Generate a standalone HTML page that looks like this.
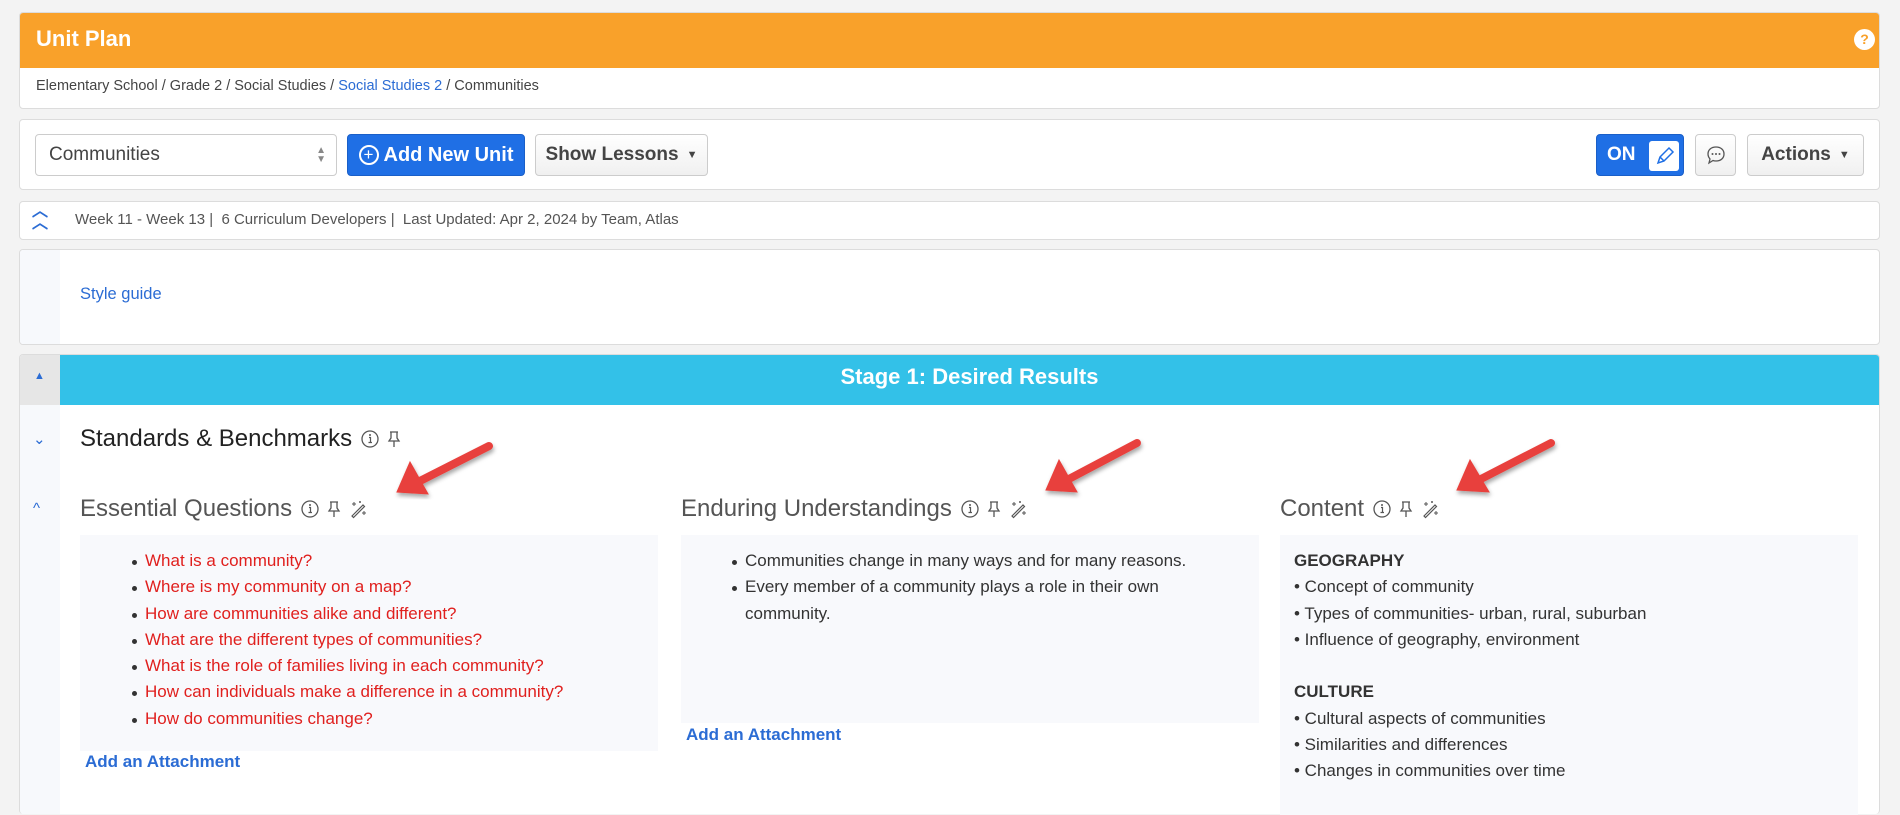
<!DOCTYPE html>
<html><head><meta charset="utf-8"><style>
*{box-sizing:border-box;margin:0;padding:0}
body{width:1900px;height:802px;overflow:hidden;background:#f3f3f3;font-family:"Liberation Sans",sans-serif;position:relative;color:#333}
.a{position:absolute}
.card{position:absolute;background:#fff;border:1px solid #dcdcdc;border-radius:4px}
.btn{position:absolute;border:1px solid #ccc;border-radius:4px;background:linear-gradient(#fff,#f0f0f0);font-size:19px;color:#444;display:flex;align-items:center;justify-content:center}
.h{position:absolute;font-size:24px;color:#555;white-space:nowrap;display:flex;align-items:center}
.h svg{margin-left:8px}
.box{position:absolute;background:#f8f9fc}
ul{list-style:none}
li{position:relative;font-size:17px;line-height:26.3px;white-space:nowrap}
li:before{content:"";position:absolute;left:-13px;top:12px;width:5px;height:5px;border-radius:50%;background:#333}
.red li{color:#e0201e}
.att{position:absolute;color:#2b6cd4;font-size:17px;font-weight:bold}
.c3 div{font-size:17px;line-height:26.3px;color:#333;white-space:nowrap}
</style></head><body>
<!-- header card -->
<div class="card" style="left:19px;top:12px;width:1861px;height:97px;overflow:hidden">
 <div class="a" style="left:0;top:0;width:100%;height:55px;background:#f9a12a"></div>
 <div class="a" style="left:16px;top:13px;font-size:22px;font-weight:bold;color:#fff">Unit Plan</div>
 <div class="a" style="left:1834px;top:16px;width:21px;height:21px;border-radius:50%;background:#fff;color:#f9a12a;font-size:14px;font-weight:bold;text-align:center;line-height:21px">?</div>
 <div class="a" style="left:16px;top:65px;font-size:14.5px;color:#444">Elementary School / Grade 2 / Social Studies / <span style="color:#2b6cd4">Social Studies 2</span> / Communities</div>
</div>
<!-- toolbar -->
<div class="card" style="left:19px;top:119px;width:1861px;height:71px"></div>
<div class="btn" style="left:35px;top:134px;width:302px;height:42px;justify-content:flex-start;padding-left:13px;background:#fff;color:#444">Communities<span class="a" style="right:10px;top:11px;font-size:10px;line-height:9px;color:#888">▲<br>▼</span></div>
<div class="btn" style="left:347px;top:134px;width:178px;height:42px;background:#1f6fe5;border-color:#1a5fc8;color:#fff;font-weight:bold;font-size:20px"><span style="display:inline-block;width:20px;height:20px;border:2px solid #fff;border-radius:50%;font-size:17px;line-height:15px;text-align:center;margin-right:5px;font-weight:normal">+</span>Add New Unit</div>
<div class="btn" style="left:535px;top:134px;width:173px;height:42px;font-weight:bold">Show Lessons <span style="font-size:11px;margin-left:8px">▼</span></div>
<div class="btn" style="left:1596px;top:134px;width:88px;height:42px;background:#1f6fe5;border-color:#1a5fc8;color:#fff;font-weight:bold;justify-content:flex-start;padding-left:10px">ON<span class="a" style="left:52px;top:6px;width:30px;height:30px;background:#fff;border-radius:3px"><svg width="30" height="30" viewBox="0 0 30 30"><path d="M9 22l2-6 9-9 4 4-9 9z M11 16l4 4" fill="none" stroke="#1f6fe5" stroke-width="1.5"/></svg></span></div>
<div class="btn" style="left:1695px;top:134px;width:41px;height:42px"><svg width="22" height="22" viewBox="0 0 22 22"><path d="M11 3c5 0 8 3 8 7s-3 7-8 7c-1 0-2 0-3-.5L4 19l1-4c-1-1.2-2-3-2-5 0-4 3-7 8-7z" fill="none" stroke="#555" stroke-width="1.3"/><circle cx="7.5" cy="10" r="1" fill="#555"/><circle cx="11" cy="10" r="1" fill="#555"/><circle cx="14.5" cy="10" r="1" fill="#555"/></svg></div>
<div class="btn" style="left:1747px;top:134px;width:117px;height:42px;font-weight:bold">Actions <span style="font-size:11px;margin-left:8px">▼</span></div>
<!-- meta -->
<div class="card" style="left:19px;top:201px;width:1861px;height:39px"></div>
<div class="a" style="left:32px;top:206px;font-size:16px;color:#2b6cd4;line-height:12px;font-weight:bold">︿<br>︿</div>
<div class="a" style="left:75px;top:211px;font-size:15px;color:#555">Week 11 - Week 13 |&nbsp; 6 Curriculum Developers |&nbsp; Last Updated: Apr 2, 2024 by Team, Atlas</div>
<!-- style guide -->
<div class="card" style="left:19px;top:249px;width:1861px;height:96px;overflow:hidden"><div class="a" style="left:0;top:0;width:40px;height:100%;background:#f7f9fc"></div></div>
<div class="a" style="left:80px;top:285px;font-size:16.5px;color:#2b6cd4">Style guide</div>
<!-- stage -->
<div class="card" style="left:19px;top:354px;width:1861px;height:460px;overflow:hidden;border-bottom:none">
 <div class="a" style="left:0;top:0;width:40px;height:100%;background:#f7f9fc"></div>
 <div class="a" style="left:0;top:0;width:40px;height:50px;background:#e6e6e6"></div>
 <div class="a" style="left:40px;top:0;right:0;height:50px;background:#33c1e8"></div>
</div>
<div class="a" style="left:34px;top:370px;font-size:11px;color:#2b6cd4">▲</div>
<div class="a" style="left:59px;top:364px;width:1821px;text-align:center;font-size:22px;font-weight:bold;color:#fff">Stage 1: Desired Results</div>
<div class="a" style="left:33px;top:430px;font-size:15px;color:#2b6cd4">⌄</div>
<div class="a" style="left:33px;top:500px;font-size:15px;color:#2b6cd4">^</div>

<svg width="0" height="0" style="position:absolute"><defs>
<symbol id="ic" viewBox="0 0 20 20"><circle cx="10" cy="10" r="8" fill="none" stroke="#555" stroke-width="1.3"/><path d="M9 8.5h1.5v5M8.5 13.5h3.5" fill="none" stroke="#555" stroke-width="1.2"/><circle cx="10" cy="6" r="1" fill="#555"/></symbol>
<symbol id="pin" viewBox="0 0 20 20"><path d="M6 3h8M7 3v6l-2 3h10l-2-3V3M10 12v6" fill="none" stroke="#555" stroke-width="1.3"/></symbol>
<symbol id="wand" viewBox="0 0 20 20"><path d="M4 17L15 6l1.5 1.5L5.5 18.5z" fill="none" stroke="#555" stroke-width="1.2"/><path d="M6 3v4M4 5h4M16 12v4M14 14h4M12 2v2M11 3h2" stroke="#555" stroke-width="1"/></symbol>
</defs></svg>

<div class="h" style="left:80px;top:425px;color:#222">Standards &amp; Benchmarks<svg width="20" height="20"><use href="#ic"/></svg><svg width="20" height="20" style="margin-left:4px"><use href="#pin"/></svg></div>
<div class="h" style="left:80px;top:495px">Essential Questions<svg width="20" height="20"><use href="#ic"/></svg><svg width="20" height="20" style="margin-left:4px"><use href="#pin"/></svg><svg width="20" height="20" style="margin-left:4px"><use href="#wand"/></svg></div>
<div class="h" style="left:681px;top:495px">Enduring Understandings<svg width="20" height="20"><use href="#ic"/></svg><svg width="20" height="20" style="margin-left:4px"><use href="#pin"/></svg><svg width="20" height="20" style="margin-left:4px"><use href="#wand"/></svg></div>
<div class="h" style="left:1280px;top:495px">Content<svg width="20" height="20"><use href="#ic"/></svg><svg width="20" height="20" style="margin-left:4px"><use href="#pin"/></svg><svg width="20" height="20" style="margin-left:4px"><use href="#wand"/></svg></div>

<div class="box" style="left:80px;top:535px;width:578px;height:216px"></div>
<ul class="red a" style="left:145px;top:548px">
<li>What is a community?</li><li>Where is my community on a map?</li><li>How are communities alike and different?</li><li>What are the different types of communities?</li><li>What is the role of families living in each community?</li><li>How can individuals make a difference in a community?</li><li>How do communities change?</li></ul>
<div class="att" style="left:85px;top:752px">Add an Attachment</div>

<div class="box" style="left:681px;top:535px;width:578px;height:188px"></div>
<ul class="a" style="left:745px;top:548px;color:#333">
<li>Communities change in many ways and for many reasons.</li><li>Every member of a community plays a role in their own<br>community.</li></ul>
<div class="att" style="left:686px;top:725px">Add an Attachment</div>

<div class="box" style="left:1280px;top:535px;width:578px;height:280px"></div>
<div class="a c3" style="left:1294px;top:548px">
<div style="font-weight:bold">GEOGRAPHY</div><div>• Concept of community</div><div>• Types of communities- urban, rural, suburban</div><div>• Influence of geography, environment</div><div>&nbsp;</div>
<div style="font-weight:bold">CULTURE</div><div>• Cultural aspects of communities</div><div>• Similarities and differences</div><div>• Changes in communities over time</div></div>

<svg class="a" style="left:0;top:0" width="1900" height="802">
<defs><filter id="sh"><feDropShadow dx="1" dy="3" stdDeviation="2" flood-opacity="0.35"/></filter></defs>
<g fill="#e8413c" stroke="#e8413c" stroke-linecap="round" filter="url(#sh)">
<line x1="489" y1="446" x2="418" y2="482" stroke-width="8"/><polygon points="397,492 410,462 428,494" stroke-width="1"/>
<line x1="1137" y1="443" x2="1067" y2="480" stroke-width="8"/><polygon points="1046,490 1059,460 1077,492" stroke-width="1"/>
<line x1="1551" y1="443" x2="1479" y2="480" stroke-width="8"/><polygon points="1457,490 1470,460 1489,492" stroke-width="1"/>
</g></svg>
</body></html>
